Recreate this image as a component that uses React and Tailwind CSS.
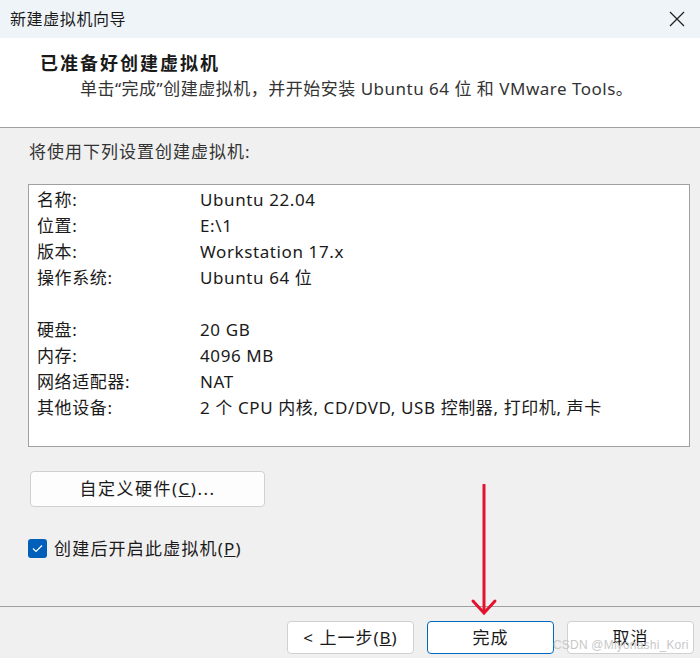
import React from "react";

const rows = [
    ["名称:", "Ubuntu 22.04"],
    ["位置:", "E:\\1"],
    ["版本:", "Workstation 17.x"],
    ["操作系统:", "Ubuntu 64 位"],
    null,
    ["硬盘:", "20 GB"],
    ["内存:", "4096 MB"],
    ["网络适配器:", "NAT"],
    ["其他设备:", "2 个 CPU 内核, CD/DVD, USB 控制器, 打印机, 声卡"],
];

function Btn({ children, primary }) {
    return (
        <button
            className={
                "w-[127px] h-[33px] rounded-[4px] bg-white text-[17px] tracking-[1px] text-[#1a1a1a] " +
                (primary ? "border border-[#0067c0]" : "border border-[#d0d0d0]")
            }
        >
            {children}
        </button>
    );
}

export default function App() {
    return (
        <div
            className="relative w-[700px] h-[658px] overflow-hidden bg-[#f0f0f0] flex flex-col text-[#1a1a1a]"
            style={{ fontFamily: '"Segoe UI", "Noto Sans", "Noto Sans CJK SC", sans-serif' }}
        >
            {/* title bar */}
            <div className="h-[38px] bg-[#eff4f9] flex items-center justify-between pl-[10px] pr-[14px]">
                <span className="text-[16px] tracking-[0.6px]">新建虚拟机向导</span>
                <svg width="18" height="18" viewBox="0 0 18 18">
                    <path d="M2 2 L16 16 M16 2 L2 16" stroke="#222" strokeWidth="1.3" fill="none" />
                </svg>
            </div>

            {/* header */}
            <div className="h-[90px] bg-white border-b border-[#a0a0a0] flex flex-col pt-[11px]">
                <div className="pl-[40px] text-[18px] tracking-[2px] font-bold leading-[26px]" style={{ fontFamily: '"Noto Sans CJK SC", sans-serif' }}>
                    已准备好创建虚拟机
                </div>
                <div className="pl-[80px] mt-[2px] text-[17px] tracking-[0.5px] leading-[24px] text-[#333]">
                    单击“完成”创建虚拟机，并开始安装 Ubuntu 64 位 和 VMware Tools。
                </div>
            </div>

            {/* body */}
            <div className="flex-1 flex flex-col px-[28px] pt-[12px]">
                <div className="text-[17px] tracking-[1px] leading-[24px] pl-[1px] text-[#333]">将使用下列设置创建虚拟机:</div>
                <div className="mt-[20px] h-[263px] w-[662px] bg-white border border-[#a0a0a0] pt-[2px] pl-[8px]">
                    {rows.map((r, i) =>
                        r ? (
                            <div key={i} className="flex h-[26px] items-center text-[17px] tracking-[0.6px]">
                                <span className="w-[163px]">{r[0]}</span>
                                <span>{r[1]}</span>
                            </div>
                        ) : (
                            <div key={i} className="h-[26px]" />
                        )
                    )}
                </div>

                <button className="mt-[24px] w-[235px] h-[36px] rounded-[4px] bg-[#fdfdfd] border border-[#d0d0d0] text-[17px] tracking-[1.5px] ml-[2px]">
                    自定义硬件(<span className="underline">C</span>)...
                </button>

                <label className="mt-[29px] flex items-center gap-[7px]">
                    <span className="w-[19px] h-[19px] rounded-[3px] bg-[#005fb8] flex items-center justify-center">
                        <svg width="11" height="9" viewBox="0 0 11 9">
                            <path d="M1 4.5 L4 7.5 L10 1.5" stroke="#fff" strokeWidth="1.2" fill="none" />
                        </svg>
                    </span>
                    <span className="text-[17px] tracking-[1.2px]">创建后开启此虚拟机(<span className="underline">P</span>)</span>
                </label>
            </div>

            {/* footer */}
            <div className="h-[52px] border-t border-[#a0a0a0] flex items-start justify-end gap-[13px] pr-[6px] pt-[14px]">
                <Btn>&lt; 上一步(<span className="underline">B</span>)</Btn>
                <Btn primary>完成</Btn>
                <Btn>取消</Btn>
            </div>

            {/* watermark */}
            <div className="absolute left-[553px] top-[636px] text-[12px] text-[#c8c8c8] tracking-[0.2px]" style={{ fontFamily: '"Liberation Sans", sans-serif' }}>
                CSDN @Miyonashi_Kori
            </div>

            {/* red arrow annotation */}
            <svg className="absolute left-[470px] top-[484px]" width="30" height="134" viewBox="0 0 30 134">
                <path d="M14 1 L14 128" stroke="#e3122f" strokeWidth="3" fill="none" strokeLinecap="round" />
                <path d="M3 117 L14 129 L25 117" stroke="#e3122f" strokeWidth="3" fill="none" strokeLinecap="round" />
            </svg>
        </div>
    );
}
